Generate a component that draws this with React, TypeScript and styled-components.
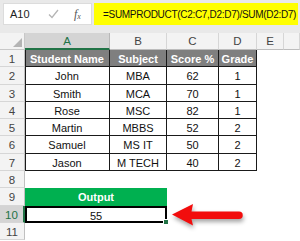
import React from 'react';
import styled, { createGlobalStyle, css } from 'styled-components';

const GlobalStyle = createGlobalStyle`
	html, body {
		margin: 0;
		padding: 0;
		background: #ffffff;
	}
	body {
		font-family: 'Liberation Sans', Arial, sans-serif;
		color: #000;
	}
`;

const Page = styled.div`
	position: relative;
	width: 300px;
	height: 241px;
	overflow: hidden;
	background: #ffffff;
`;

// строка формул сверху
const FormulaBar = styled.div`
	display: flex;
	gap: 2px;
	height: 33px;
	box-sizing: border-box;
	padding: 3px 2px 8px 3px;
	background: #e9e9e9;
`;

const NameBox = styled.div`
	display: flex;
	align-items: center;
	width: 89px;
	box-sizing: border-box;
	background: #ffffff;
	border: 1px solid #dcdcdc;
	font-size: 11px;
	color: #222;
`;

const CellRef = styled.span`
	width: 38px;
	padding-left: 6px;
`;

const Fx = styled.span`
	margin-left: 15px;
	font-family: 'Liberation Serif', 'Times New Roman', serif;
	font-style: italic;
	font-size: 12px;
	color: #555;
	sub {
		font-size: 8px;
		vertical-align: -1px;
	}
`;

const FormulaInput = styled.div`
	flex: 1;
	display: flex;
	align-items: center;
	padding-left: 9px;
	background: #ffff00;
	font-size: 10px;
	letter-spacing: -0.3px;
	color: #111;
	white-space: nowrap;
	overflow: hidden;
`;

// сетка листа
const Sheet = styled.div`
	display: grid;
	grid-template-columns: 25px 85px 57px 52px 38px 27px 16px;
	grid-template-rows: 17px repeat(11, 17.3px);
`;

const baseCell = css`
	box-sizing: border-box;
	overflow: hidden;
	white-space: nowrap;
	text-align: center;
	font-size: 11px;
`;

const Corner = styled.div`
	${baseCell};
	position: relative;
	background: #f3f3f3;
	border-right: 1px solid #c8c8c8;
	border-bottom: 1px solid #c8c8c8;
	&::after {
		content: '';
		position: absolute;
		right: 2px;
		bottom: 2px;
		border-style: solid;
		border-width: 0 0 9px 9px;
		border-color: transparent transparent #b4b4b4 transparent;
	}
`;

const ColHeader = styled.div<{ $selected?: boolean }>`
	${baseCell};
	line-height: 17px;
	font-size: 11.5px;
	background: ${(p) => (p.$selected ? '#d4d4d4' : '#f3f3f3')};
	color: ${(p) => (p.$selected ? '#217346' : '#444')};
	border-right: 1px solid ${(p) => (p.$selected ? '#b8b8b8' : '#d6d6d6')};
	border-bottom: ${(p) => (p.$selected ? '2px solid #217346' : '1px solid #bdbdbd')};
`;

const RowHeader = styled.div<{ $selected?: boolean }>`
	${baseCell};
	line-height: 17px;
	padding-top: 1px;
	font-size: 11.5px;
	background: ${(p) => (p.$selected ? '#d4d4d4' : '#f3f3f3')};
	color: ${(p) => (p.$selected ? '#217346' : '#444')};
	border-bottom: 1px solid #d6d6d6;
	border-right: ${(p) => (p.$selected ? '2px solid #217346' : '1px solid #c0c0c0')};
`;

const TableCell = styled.div<{ $first?: boolean; $head?: boolean }>`
	${baseCell};
	line-height: 17px;
	padding-top: 1px;
	border-right: 1px solid #1a1a1a;
	border-bottom: 1px solid #1a1a1a;
	box-shadow: ${(p) => (p.$first ? 'inset 1px 0 0 #1a1a1a' : 'none')};
	background: ${(p) => (p.$head ? '#7f7f7f' : '#ffffff')};
	color: ${(p) => (p.$head ? '#ffffff' : '#111')};
	font-weight: ${(p) => (p.$head ? 700 : 400)};
`;

const Blank = styled.div<{ $span?: number }>`
	grid-column: span ${(p) => p.$span ?? 1};
	background: #ffffff;
`;

const OutputLabel = styled.div`
	${baseCell};
	grid-column: span 2;
	line-height: 17px;
	padding-top: 1px;
	background: #00b050;
	color: #ffffff;
	font-weight: 700;
`;

const OutputValue = styled.div`
	${baseCell};
	position: relative;
	overflow: visible;
	grid-column: span 2;
	line-height: 14px;
	padding-top: 1px;
	border: 2px solid #000;
	color: #111;
`;

const FillHandle = styled.span`
	position: absolute;
	right: -4px;
	bottom: -4px;
	width: 4px;
	height: 4px;
	background: #217346;
	border: 1px solid #ffffff;
`;

const Arrow = styled.svg`
	position: absolute;
	left: 170px;
	top: 200px;
	filter: drop-shadow(1px 3px 2px rgba(0, 0, 0, 0.35));
`;

const columns = ['A', 'B', 'C', 'D', 'E', ''];
const heads = ['Student Name', 'Subject', 'Score %', 'Grade'];
const rows = [
	['John', 'MBA', '62', '1'],
	['Smith', 'MCA', '70', '1'],
	['Rose', 'MSC', '82', '1'],
	['Martin', 'MBBS', '52', '2'],
	['Samuel', 'MS IT', '50', '2'],
	['Jason', 'M TECH', '40', '2'],
];

export default function App() {
	return (
		<Page>
			<GlobalStyle />
			<FormulaBar>
				<NameBox>
					<CellRef>A10</CellRef>
					<svg width='11' height='10' viewBox='0 0 11 10'>
						<polyline points='1,5.5 4,8.5 10,1' fill='none' stroke='#b5b5b5' strokeWidth='1.3' />
					</svg>
					<Fx>
						f<sub>x</sub>
					</Fx>
				</NameBox>
				<FormulaInput>=SUMPRODUCT(C2:C7,D2:D7)/SUM(D2:D7)</FormulaInput>
			</FormulaBar>

			<Sheet>
				<Corner />
				{columns.map((c, i) => (
					<ColHeader key={i} $selected={c === 'A'}>
						{c}
					</ColHeader>
				))}

				<RowHeader>1</RowHeader>
				{heads.map((h, i) => (
					<TableCell key={h} $head $first={i === 0}>
						{h}
					</TableCell>
				))}
				<Blank $span={2} />

				{rows.map((r, ri) => (
					<React.Fragment key={ri}>
						<RowHeader>{ri + 2}</RowHeader>
						{r.map((v, i) => (
							<TableCell key={i} $first={i === 0}>
								{v}
							</TableCell>
						))}
						<Blank $span={2} />
					</React.Fragment>
				))}

				<RowHeader>8</RowHeader>
				<Blank $span={6} />

				<RowHeader>9</RowHeader>
				<OutputLabel>Output</OutputLabel>
				<Blank $span={4} />

				<RowHeader $selected>10</RowHeader>
				<OutputValue>
					55
					<FillHandle />
				</OutputValue>
				<Blank $span={4} />

				<RowHeader>11</RowHeader>
				<Blank $span={6} />
			</Sheet>

			<Arrow width='78' height='34' viewBox='0 0 78 34'>
				<path
					d='M2 14.5 L23 4 L21.5 11.5 L69 11.5 A3.75 3.75 0 0 1 69 19 L21.5 19 L23 25.5 Z'
					fill='#f20d0d'
				/>
			</Arrow>
		</Page>
	);
}
